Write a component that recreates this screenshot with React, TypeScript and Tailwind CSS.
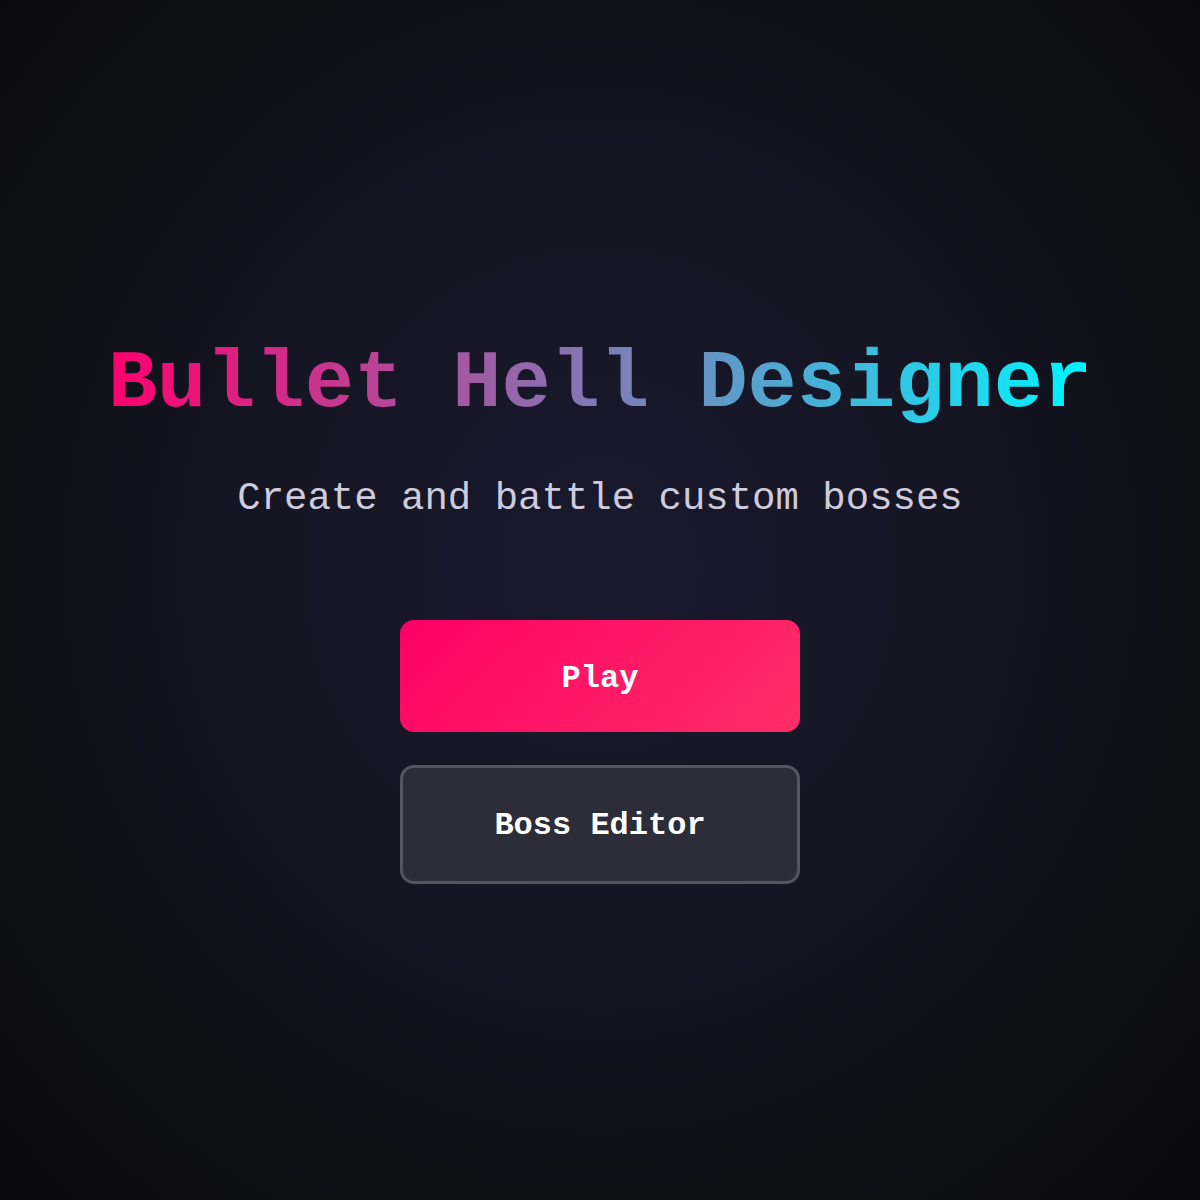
import React from "react";

export default function App() {
  return (
    <div
      className="w-full h-[1200px] overflow-hidden bg-[radial-gradient(ellipse_at_50%_47%,#1b1a2e_0%,#141422_45%,#0a0a0d_100%)]"
      style={{ fontFamily: '"Liberation Mono", "DejaVu Sans Mono", monospace' }}
    >
      <div className="flex flex-col items-center pt-[344px]">
        <h1 className="text-[82px] leading-none font-bold whitespace-nowrap bg-[linear-gradient(90deg,#ff006e,#00f5ff)] bg-clip-text text-transparent">
          Bullet Hell Designer
        </h1>
        <p className="mt-[54px] text-[39px] leading-none text-[#cdcbdc] whitespace-nowrap">
          Create and battle custom bosses
        </p>
        <div className="mt-[101px] flex flex-col gap-[33px] w-[400px]">
          <button className="h-[112px] w-full rounded-[14px] bg-[linear-gradient(135deg,#ff0066,#ff2e66)] text-white text-[32px] font-bold leading-none pt-[6px]">
            Play
          </button>
          <button className="h-[119px] w-full rounded-[14px] border-[3px] border-[#55545f] bg-[#2d2c39] text-white text-[32px] font-bold leading-none pt-[3px]">
            Boss Editor
          </button>
        </div>
      </div>
    </div>
  );
}
